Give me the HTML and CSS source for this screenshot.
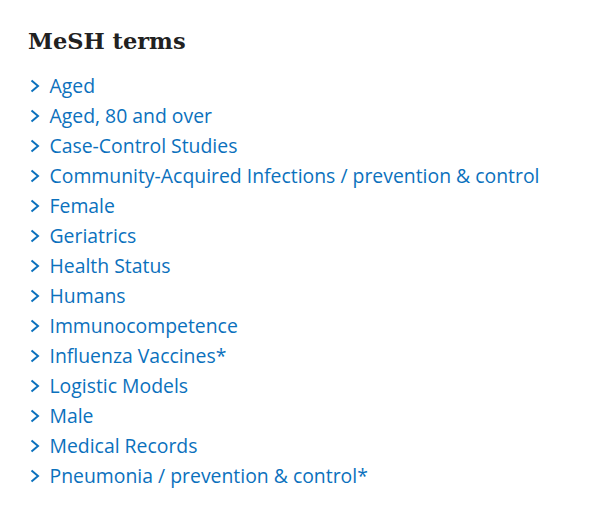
FILE: index.html
```html
<!DOCTYPE html>
<html>
<head>
<meta charset="utf-8">
<link rel="stylesheet" href="styles.css">
</head>
<body>
<section class="mesh">
  <h2 class="mesh-title">MeSH terms</h2>
  <ul class="mesh-list">
    <li><a href="#"><svg class="chev" viewBox="0 0 10 14"><path d="M1.5 1.5 L8 7 L1.5 12.5"/></svg>Aged</a></li>
    <li><a href="#"><svg class="chev" viewBox="0 0 10 14"><path d="M1.5 1.5 L8 7 L1.5 12.5"/></svg>Aged, 80 and over</a></li>
    <li><a href="#"><svg class="chev" viewBox="0 0 10 14"><path d="M1.5 1.5 L8 7 L1.5 12.5"/></svg>Case-Control Studies</a></li>
    <li><a href="#"><svg class="chev" viewBox="0 0 10 14"><path d="M1.5 1.5 L8 7 L1.5 12.5"/></svg>Community-Acquired Infections / prevention &amp; control</a></li>
    <li><a href="#"><svg class="chev" viewBox="0 0 10 14"><path d="M1.5 1.5 L8 7 L1.5 12.5"/></svg>Female</a></li>
    <li><a href="#"><svg class="chev" viewBox="0 0 10 14"><path d="M1.5 1.5 L8 7 L1.5 12.5"/></svg>Geriatrics</a></li>
    <li><a href="#"><svg class="chev" viewBox="0 0 10 14"><path d="M1.5 1.5 L8 7 L1.5 12.5"/></svg>Health Status</a></li>
    <li><a href="#"><svg class="chev" viewBox="0 0 10 14"><path d="M1.5 1.5 L8 7 L1.5 12.5"/></svg>Humans</a></li>
    <li><a href="#"><svg class="chev" viewBox="0 0 10 14"><path d="M1.5 1.5 L8 7 L1.5 12.5"/></svg>Immunocompetence</a></li>
    <li><a href="#"><svg class="chev" viewBox="0 0 10 14"><path d="M1.5 1.5 L8 7 L1.5 12.5"/></svg>Influenza Vaccines*</a></li>
    <li><a href="#"><svg class="chev" viewBox="0 0 10 14"><path d="M1.5 1.5 L8 7 L1.5 12.5"/></svg>Logistic Models</a></li>
    <li><a href="#"><svg class="chev" viewBox="0 0 10 14"><path d="M1.5 1.5 L8 7 L1.5 12.5"/></svg>Male</a></li>
    <li><a href="#"><svg class="chev" viewBox="0 0 10 14"><path d="M1.5 1.5 L8 7 L1.5 12.5"/></svg>Medical Records</a></li>
    <li><a href="#"><svg class="chev" viewBox="0 0 10 14"><path d="M1.5 1.5 L8 7 L1.5 12.5"/></svg>Pneumonia / prevention &amp; control*</a></li>
  </ul>
</section>
</body>
</html>
```
FILE: styles.css
```css
html, body {
  margin: 0;
  padding: 0;
  background: #ffffff;
}
.mesh {
  padding: 26px 28px 0 28px;
}
.mesh-title {
  margin: 0 0 15px 0;
  font-family: "DejaVu Serif", serif;
  font-weight: bold;
  font-size: 22.5px;
  line-height: 30px;
  color: #212121;
}
.mesh-list {
  list-style: none;
  margin: 0;
  padding: 0;
}
.mesh-list li {
  height: 30px;
  display: flex;
  align-items: center;
}
.mesh-list a {
  display: flex;
  align-items: center;
  gap: 10px;
  text-decoration: none;
  color: #0b71bd;
  font-family: "Open Sans", sans-serif;
  font-size: 19.4px;
  line-height: 30px;
}
.chev {
  width: 10px;
  height: 14px;
  margin-left: 1.5px;
  fill: none;
  stroke: #0b71bd;
  stroke-width: 2;
  stroke-linecap: butt;
  stroke-linejoin: miter;
}
```
